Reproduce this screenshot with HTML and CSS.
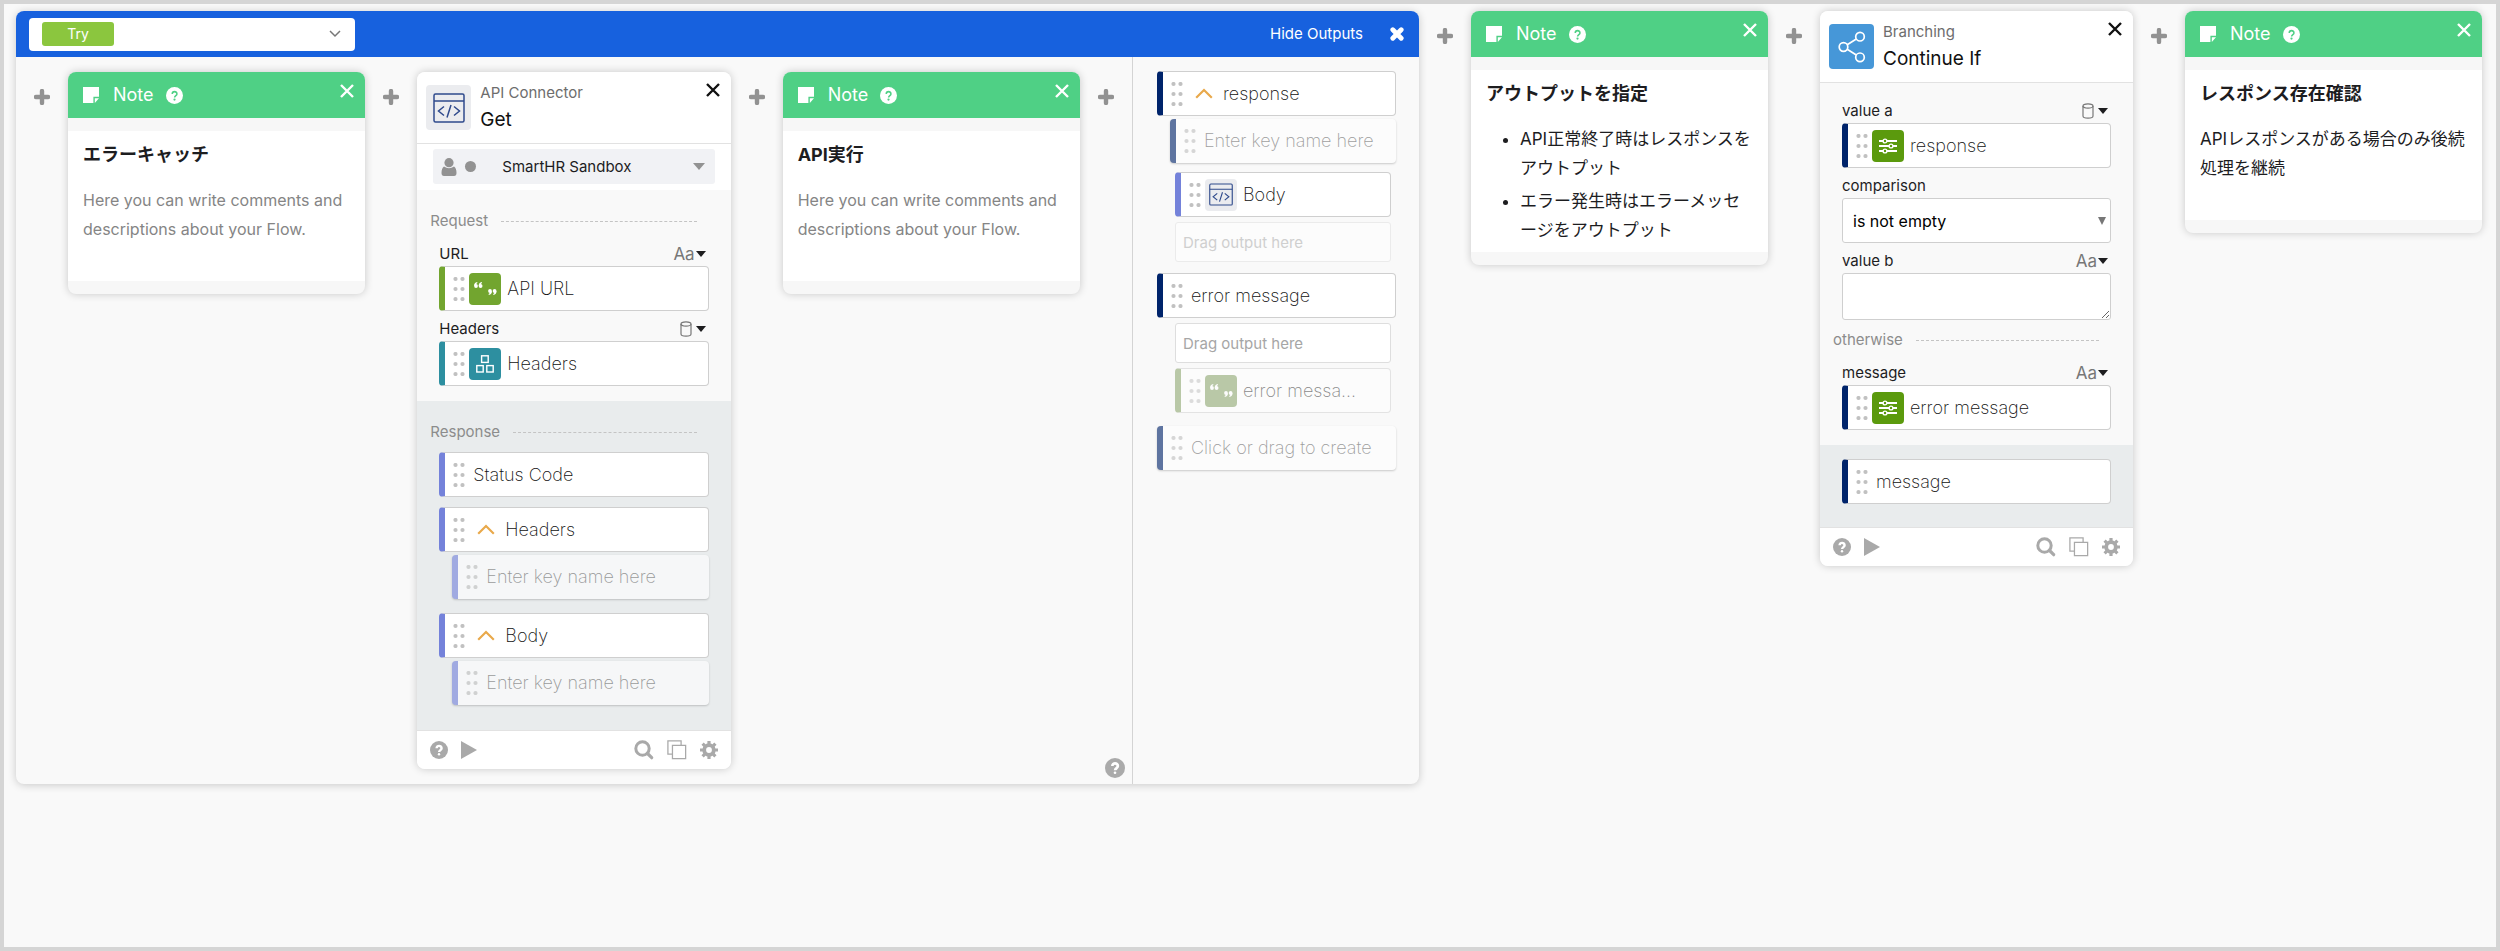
FILE: index.html
```html
<!DOCTYPE html>
<html lang="ja">
<head>
<meta charset="utf-8">
<meta name="viewport" content="width=device-width, initial-scale=1">
<title>Flow</title>
<link rel="stylesheet" href="styles.css">
</head>
<body>
<svg class="sprite" aria-hidden="true">
  <symbol id="plus" viewBox="0 0 16 16"><path d="M8 2v12M2 8h12" fill="none" stroke="currentColor" stroke-width="4.4" stroke-linecap="round"/></symbol>
  <symbol id="close" viewBox="0 0 14 14"><path d="M1 1l12 12M13 1L1 13" fill="none" stroke="currentColor" stroke-width="2.4"/></symbol>
  <symbol id="close-bold" viewBox="0 0 14 14"><path d="M2.8 2.8l8.4 8.4M11.2 2.8l-8.4 8.4" fill="none" stroke="currentColor" stroke-width="4.8" stroke-linecap="round"/></symbol>
  <symbol id="note" viewBox="0 0 16 16"><path d="M0 0h16v9.8h-5.6v6.200H0z" fill="currentColor"/><path d="M11.800 11.200H16L11.800 16z" fill="currentColor"/></symbol>
  <symbol id="help" viewBox="0 0 18 18"><circle cx="9" cy="9" r="9" fill="currentColor"/><path d="M6.600 7.300c0-3.200 5-3.200 5 0 0 1.700-2.500 1.900-2.500 3.800" fill="none" stroke="var(--mark)" stroke-width="var(--mark-width)"/><circle cx="9" cy="13.300" r="1.200" fill="var(--mark)"/></symbol>
  <symbol id="grip" viewBox="0 0 12 24"><g fill="currentColor"><circle cx="2.500" cy="2" r="2.100"/><circle cx="9.500" cy="2" r="2.100"/><circle cx="2.500" cy="12" r="2.100"/><circle cx="9.500" cy="12" r="2.100"/><circle cx="2.500" cy="22" r="2.100"/><circle cx="9.500" cy="22" r="2.100"/></g></symbol>
  <symbol id="chevron-up" viewBox="0 0 18 11"><path d="M1.200 9.800L9 2l7.800 7.800" fill="none" stroke="currentColor" stroke-width="2.200"/></symbol>
  <symbol id="caret" viewBox="0 0 12 7" preserveAspectRatio="none"><path d="M0 0h12L6 7z" fill="currentColor"/></symbol>
  <symbol id="window" viewBox="0 0 32 30"><g fill="none" stroke="currentColor" stroke-width="1.500"><rect x="1" y="1" width="30" height="28" rx="1.500"/><path d="M1 8h30M11 13.500L5.500 18l5.500 4.500M21 13.500l5.500 4.500-5.500 4.500M18 12l-4 12.500"/></g></symbol>
  <symbol id="quotes" viewBox="0 0 24 16"><g fill="currentColor"><circle cx="3" cy="5" r="1.900"/><circle cx="7.600" cy="5" r="1.900"/><path d="M1.100 5Q1 1.700 4.200 1l.2 1Q3.100 2.600 3 4zM5.700 5Q5.600 1.700 8.800 1l.2 1Q7.700 2.600 7.600 4z"/><circle cx="17" cy="10" r="1.900"/><circle cx="21.600" cy="10" r="1.900"/><path d="M18.900 10Q19 13.300 15.800 14l-.2-1Q16.900 12.400 17 11zM23.500 10Q23.600 13.300 20.400 14l-.2-1q1.300-.6 1.400-2z"/></g></symbol>
  <symbol id="cubes" viewBox="0 0 18 18"><g fill="none" stroke="currentColor" stroke-width="1.400"><rect x="5.600" y=".8" width="6.600" height="6.600"/><rect x=".8" y="10.600" width="6.400" height="6.400"/><rect x="10.800" y="10.600" width="6.400" height="6.400"/></g></symbol>
  <symbol id="sliders" viewBox="0 0 18 16"><path d="M0 3h18M0 8h18M0 13h18" stroke="currentColor" stroke-width="2"/><g fill="#5b9a0d" stroke="currentColor" stroke-width="1.400"><circle cx="6" cy="3" r="1.900"/><circle cx="12" cy="8" r="1.900"/><circle cx="6" cy="13" r="1.900"/></g></symbol>
  <symbol id="share" viewBox="0 0 28 32"><g fill="none" stroke="currentColor" stroke-width="1.700"><circle cx="5.500" cy="16" r="4.300"/><circle cx="22" cy="5.700" r="4.300"/><circle cx="22" cy="26.300" r="4.300"/><path d="M9.200 13.700l9.100-5.700M9.200 18.300l9.100 5.700"/></g></symbol>
  <symbol id="cylinder" viewBox="0 0 12 16"><g fill="none" stroke="currentColor" stroke-width="1.200"><ellipse cx="6" cy="3" rx="5" ry="2.200"/><path d="M1 3v10c0 2.900 10 2.900 10 0V3"/></g></symbol>
  <symbol id="person" viewBox="0 0 16 18"><circle cx="8" cy="4.700" r="4.600" fill="currentColor"/><path d="M3 8.500q5 3.500 10 0 2.500 1.500 2.500 6.500 0 3-2.500 3H3q-2.500 0-2.500-3 0-5 2.500-6.500z" fill="currentColor"/></symbol>
  <symbol id="play" viewBox="0 0 16 18"><path d="M0 0l16 9-16 9z" fill="currentColor"/></symbol>
  <symbol id="search" viewBox="0 0 20 20"><circle cx="8.500" cy="8.500" r="6.700" fill="none" stroke="currentColor" stroke-width="3"/><path d="M13.500 13.500l4.200 4.200" stroke="currentColor" stroke-width="3.200" stroke-linecap="round"/></symbol>
  <symbol id="copy" viewBox="0 0 22 22"><path d="M5.500 15.500H1V1h14.500v4.500M6 6h14.500v14.500H6z" fill="none" stroke="currentColor" stroke-width="1.400"/></symbol>
  <symbol id="gear" viewBox="0 0 18 18"><circle cx="9" cy="9" r="4.800" fill="none" stroke="currentColor" stroke-width="3.800"/><path d="M9 0v3M9 15v3M0 9h3M15 9h3M2.600 2.600l2.200 2.200M13.200 13.200l2.200 2.200M15.400 2.600l-2.200 2.200M4.800 13.200l-2.200 2.200" stroke="currentColor" stroke-width="3.200"/></symbol>
</svg>

<main class="canvas">
  <section class="panel">
    <header class="panel-head">
      <button class="mode" type="button"><span class="mode-tag">Try</span><svg class="mode-arrow" viewBox="0 0 12 8"><path d="M1 1l5 5 5-5" fill="none" stroke="currentColor" stroke-width="1.500"/></svg></button>
      <div class="panel-actions">
        <button class="plain hide" type="button">Hide Outputs</button>
        <button class="plain" type="button" aria-label="Remove"><svg class="i14"><use href="#close-bold"/></svg></button>
      </div>
    </header>
    <div class="panel-body">
      <div class="steps">
        <button class="add" type="button" aria-label="Add card"><svg class="i16"><use href="#plus"/></svg></button>
        <article class="card">
          <header class="note-head"><svg class="i16"><use href="#note"/></svg><h2>Note</h2><svg class="i17 on-green"><use href="#help"/></svg><button class="plain x" type="button" aria-label="Close"><svg class="i14"><use href="#close"/></svg></button></header>
          <div class="note-body"><h3>エラーキャッチ</h3><p class="hint">Here you can write comments and descriptions about your Flow.</p></div>
        </article>
        <button class="add" type="button" aria-label="Add card"><svg class="i16"><use href="#plus"/></svg></button>
        <article class="card">
          <header class="card-head">
            <span class="app app-api"><svg class="app-window"><use href="#window"/></svg></span>
            <div class="titles"><p>API Connector</p><h2>Get</h2></div>
            <button class="plain x" type="button" aria-label="Close"><svg class="i14"><use href="#close"/></svg></button>
          </header>
          <div class="account">
            <label class="account-box"><svg class="person"><use href="#person"/></svg><span class="dot"></span>
              <select aria-label="Connection"><option>SmartHR Sandbox</option></select><svg class="caret"><use href="#caret"/></svg></label>
          </div>
          <section class="inputs">
            <h3 class="rule first">Request</h3>
            <div class="label"><span>URL</span><button class="plain type" type="button"><span>Aa</span><svg class="caret small"><use href="#caret"/></svg></button></div>
            <div class="pill green"><svg class="grip"><use href="#grip"/></svg><span class="chip chip-green"><svg class="quotes"><use href="#quotes"/></svg></span><span class="name">API URL</span></div>
            <div class="label"><span>Headers</span><button class="plain type" type="button" aria-label="Object"><svg class="cylinder"><use href="#cylinder"/></svg><svg class="caret small"><use href="#caret"/></svg></button></div>
            <div class="pill teal"><svg class="grip"><use href="#grip"/></svg><span class="chip chip-teal"><svg class="i18"><use href="#cubes"/></svg></span><span class="name">Headers</span></div>
          </section>
          <section class="results">
            <h3 class="rule first">Response</h3>
            <div class="pill violet"><svg class="grip"><use href="#grip"/></svg><span class="name lone">Status Code</span></div>
            <div class="group">
              <div class="pill violet"><svg class="grip"><use href="#grip"/></svg><svg class="fold"><use href="#chevron-up"/></svg><span class="name">Headers</span></div>
              <div class="pill violet ghost key"><svg class="grip"><use href="#grip"/></svg><input type="text" aria-label="Headers key" placeholder="Enter key name here"></div>
            </div>
            <div class="group">
              <div class="pill violet"><svg class="grip"><use href="#grip"/></svg><svg class="fold"><use href="#chevron-up"/></svg><span class="name">Body</span></div>
              <div class="pill violet ghost key"><svg class="grip"><use href="#grip"/></svg><input type="text" aria-label="Body key" placeholder="Enter key name here"></div>
            </div>
          </section>
          <footer class="card-foot">
            <button class="plain" type="button" aria-label="Help"><svg class="i18 on-white"><use href="#help"/></svg></button>
            <button class="plain" type="button" aria-label="Run"><svg class="play"><use href="#play"/></svg></button>
            <button class="plain push" type="button" aria-label="Search"><svg class="i20"><use href="#search"/></svg></button>
            <button class="plain" type="button" aria-label="Duplicate"><svg class="i20"><use href="#copy"/></svg></button>
            <button class="plain" type="button" aria-label="Settings"><svg class="i18"><use href="#gear"/></svg></button>
          </footer>
        </article>
        <button class="add" type="button" aria-label="Add card"><svg class="i16"><use href="#plus"/></svg></button>
        <article class="card">
          <header class="note-head"><svg class="i16"><use href="#note"/></svg><h2>Note</h2><svg class="i17 on-green"><use href="#help"/></svg><button class="plain x" type="button" aria-label="Close"><svg class="i14"><use href="#close"/></svg></button></header>
          <div class="note-body"><h3>API実行</h3><p class="hint">Here you can write comments and descriptions about your Flow.</p></div>
        </article>
        <button class="add" type="button" aria-label="Add card"><svg class="i16"><use href="#plus"/></svg></button>
        <button class="plain panel-help" type="button" aria-label="Help"><svg class="i20 on-white"><use href="#help"/></svg></button>
      </div>
      <aside class="outputs">
        <div class="output">
          <div class="pill navy"><svg class="grip"><use href="#grip"/></svg><svg class="fold"><use href="#chevron-up"/></svg><span class="name">response</span></div>
          <div class="pill navy ghost key"><svg class="grip"><use href="#grip"/></svg><input type="text" aria-label="response key" placeholder="Enter key name here"></div>
          <div class="nested">
            <div class="pill violet"><svg class="grip"><use href="#grip"/></svg><span class="chip chip-api"><svg class="chip-window"><use href="#window"/></svg></span><span class="name">Body</span></div>
            <div class="drop faint">Drag output here</div>
          </div>
        </div>
        <div class="output">
          <div class="pill navy"><svg class="grip"><use href="#grip"/></svg><span class="name lone">error message</span></div>
          <div class="nested">
            <div class="drop">Drag output here</div>
            <div class="pill olive dimmed"><svg class="grip"><use href="#grip"/></svg><span class="chip chip-olive"><svg class="quotes"><use href="#quotes"/></svg></span><span class="name">error messa...</span></div>
          </div>
        </div>
        <div class="pill navy ghost"><svg class="grip"><use href="#grip"/></svg><input type="text" aria-label="New output" placeholder="Click or drag to create"></div>
      </aside>
    </div>
  </section>

  <button class="add" type="button" aria-label="Add card"><svg class="i16"><use href="#plus"/></svg></button>
  <article class="card">
    <header class="note-head"><svg class="i16"><use href="#note"/></svg><h2>Note</h2><svg class="i17 on-green"><use href="#help"/></svg><button class="plain x" type="button" aria-label="Close"><svg class="i14"><use href="#close"/></svg></button></header>
    <div class="note-body"><h3>アウトプットを指定</h3><ul><li>API正常終了時はレスポンスをアウトプット</li><li>エラー発生時はエラーメッセージをアウトプット</li></ul></div>
  </article>
  <button class="add" type="button" aria-label="Add card"><svg class="i16"><use href="#plus"/></svg></button>
  <article class="card">
    <header class="card-head">
      <span class="app app-branch"><svg class="share"><use href="#share"/></svg></span>
      <div class="titles"><p>Branching</p><h2>Continue If</h2></div>
      <button class="plain x" type="button" aria-label="Close"><svg class="i14"><use href="#close"/></svg></button>
    </header>
    <section class="inputs conditions">
      <div class="label"><span>value a</span><button class="plain type" type="button" aria-label="Object"><svg class="cylinder"><use href="#cylinder"/></svg><svg class="caret small"><use href="#caret"/></svg></button></div>
      <div class="pill navy"><svg class="grip"><use href="#grip"/></svg><span class="chip chip-leaf"><svg class="i18"><use href="#sliders"/></svg></span><span class="name">response</span></div>
      <div class="label"><label for="comparison">comparison</label></div>
      <div class="pick"><select id="comparison"><option>is not empty</option></select><svg class="pick-arrow"><use href="#caret"/></svg></div>
      <div class="label"><label for="value-b">value b</label><button class="plain type" type="button"><span>Aa</span><svg class="caret small"><use href="#caret"/></svg></button></div>
      <textarea id="value-b"></textarea>
      <h3 class="rule">otherwise</h3>
      <div class="label"><span>message</span><button class="plain type" type="button"><span>Aa</span><svg class="caret small"><use href="#caret"/></svg></button></div>
      <div class="pill navy"><svg class="grip"><use href="#grip"/></svg><span class="chip chip-leaf"><svg class="i18"><use href="#sliders"/></svg></span><span class="name">error message</span></div>
    </section>
    <section class="results untitled">
      <div class="pill navy"><svg class="grip"><use href="#grip"/></svg><span class="name lone">message</span></div>
    </section>
    <footer class="card-foot">
      <button class="plain" type="button" aria-label="Help"><svg class="i18 on-white"><use href="#help"/></svg></button>
      <button class="plain" type="button" aria-label="Run"><svg class="play"><use href="#play"/></svg></button>
      <button class="plain push" type="button" aria-label="Search"><svg class="i20"><use href="#search"/></svg></button>
      <button class="plain" type="button" aria-label="Duplicate"><svg class="i20"><use href="#copy"/></svg></button>
      <button class="plain" type="button" aria-label="Settings"><svg class="i18"><use href="#gear"/></svg></button>
    </footer>
  </article>
  <button class="add" type="button" aria-label="Add card"><svg class="i16"><use href="#plus"/></svg></button>
  <article class="card">
    <header class="note-head"><svg class="i16"><use href="#note"/></svg><h2>Note</h2><svg class="i17 on-green"><use href="#help"/></svg><button class="plain x" type="button" aria-label="Close"><svg class="i14"><use href="#close"/></svg></button></header>
    <div class="note-body"><h3>レスポンス存在確認</h3><p>APIレスポンスがある場合のみ後続処理を継続</p></div>
  </article>
</main>
</body>
</html>
```

FILE: styles.css
```css
* { box-sizing: border-box; }

body {
  margin: 0;
  font-family: Inter, "Noto Sans CJK JP", sans-serif;
  font-size: 15px;
  line-height: 22px;
  color: #1d1d1f;
}

h2, h3, p, ul { margin: 0; font-weight: 400; }
svg { display: block; flex: none; }
button, input, select, textarea { font: inherit; color: inherit; }
.sprite { position: absolute; width: 0; height: 0; }

.i14 { width: 14px; height: 14px; }
.i16 { width: 16px; height: 16px; }
.i17 { width: 17px; height: 17px; }
.i18 { width: 18px; height: 18px; }
.i20 { width: 20px; height: 20px; }
.on-green { --mark: #4fd085; --mark-width: 1.6; }
.on-white { --mark: #fff; --mark-width: 2.4; }

.canvas {
  display: grid;
  grid-template-columns: minmax(0, 1403fr) 52px minmax(0, 297fr) 52px minmax(0, 313fr) 52px minmax(0, 297fr);
  align-items: start;
  min-height: 100vh;
  padding: 7px 14px 16px 12px;
  border: 4px solid #d5d5d5;
  background: #f9f9f9;
}

.plain { padding: 0; border: 0; background: none; cursor: pointer; }

.add {
  display: flex;
  justify-content: center;
  padding: 17px 0 0;
  border: 0;
  background: none;
  color: #929292;
  cursor: pointer;
}

/* Error-handling panel */
.panel {
  border-radius: 8px;
  background: #f9f9f9;
  box-shadow: 0 1px 8px rgba(0, 0, 0, .2);
}

.panel-head {
  display: flex;
  align-items: center;
  justify-content: space-between;
  height: 46px;
  padding: 0 15px 0 13px;
  border-radius: 8px 8px 0 0;
  background: #1761de;
  color: #fff;
}

.mode {
  display: flex;
  align-items: center;
  justify-content: space-between;
  width: 326px;
  height: 33px;
  padding: 0 14px 0 13px;
  border: 0;
  border-radius: 4px;
  background: #fff;
}

.mode-tag {
  width: 72px;
  border-radius: 3px;
  background: #8bc63e;
  color: #fff;
  font-size: 14px;
  line-height: 24px;
}

.mode-arrow { width: 12px; height: 8px; color: #777; }
.panel-actions { display: flex; align-items: center; gap: 27px; }
.panel-body { display: grid; grid-template-columns: minmax(0, 1117fr) minmax(0, 286fr); }

.steps {
  position: relative;
  display: grid;
  grid-template-columns: 52px minmax(0, 297fr) 52px minmax(0, 313fr) 52px minmax(0, 297fr) 52px;
  align-items: start;
  padding: 15px 0;
  border-right: 1px solid #d4d4d4;
}

.panel-help { position: absolute; right: 7px; bottom: 6px; color: #aaa; }

/* Cards */
.card {
  overflow: hidden;
  border-radius: 8px;
  background: #f7f7f7;
  box-shadow: 0 0 8px rgba(0, 0, 0, .2);
}

.x { align-self: flex-start; margin-left: auto; }

.note-head {
  display: flex;
  align-items: center;
  height: 46px;
  padding: 0 11px 0 15px;
  background: #4fd085;
  color: #fff;
}

.note-head h2 { margin: 0 12px 0 14px; font-size: 18px; }
.note-head .x { margin-top: 12px; }

.note-body {
  min-height: 150px;
  margin: 13px 0;
  padding: 9px 12px 7px 15px;
  background: #fff;
  font-size: 17px;
  line-height: 29px;
  line-break: normal;
}

.note-body h3 { margin-bottom: 17px; font-size: 18px; font-weight: 700; }
.note-body ul { padding-left: 34px; }
.note-body li + li { margin-top: 4px; }
.note-body .hint { color: #858585; font-size: 16px; }

.card-head {
  display: flex;
  align-items: flex-start;
  padding: 13px 11px 12px 9px;
  border-bottom: 1px solid #e2e2e2;
  background: #fff;
}

.app {
  display: flex;
  align-items: center;
  justify-content: center;
  width: 45px;
  height: 45px;
  border-radius: 4px;
}

.app-api, .chip-api { background: #ebecef; color: #2f4a8c; }
.app-branch { background: #4697d8; color: #fff; }
.app-window { width: 32px; height: 30px; }
.share { width: 28px; height: 32px; }
.titles { margin: -3px 0 0 9px; color: #6d6d6d; }
.titles h2 { margin-top: 5px; color: #111; font-size: 19px; }
.card-head .x { margin-top: -2px; color: #111; }

.account { padding: 5px 16px 6px; background: #fff; }

.account-box {
  display: flex;
  align-items: center;
  height: 35px;
  padding: 0 10px 0 8px;
  border-radius: 3px;
  background: #f1f2f5;
  color: #929292;
}

.person { width: 16px; height: 18px; }
.dot { width: 11px; height: 11px; margin: 0 26px 0 8px; border-radius: 50%; background: currentColor; }
.account-box select { flex: 1; min-width: 0; padding: 0; border: 0; appearance: none; background: none; color: #1d1d1f; }

.inputs { padding: 0 22px 15px; background: #f9f9f9; }
.conditions { padding-top: 10px; }

.rule {
  display: flex;
  align-items: center;
  gap: 13px;
  margin: 0 12px 0 -9px;
  padding: 9px 0 4px;
  color: #8c8c8c;
  font-size: 15px;
}

.rule.first { padding-top: 20px; }
.rule::after { content: ""; flex: 1; border-top: 1px dashed #c4c4c4; }

.label {
  display: flex;
  align-items: center;
  justify-content: space-between;
  height: 24px;
  margin-top: 6px;
  padding-right: 3px;
}

.type { display: flex; align-items: center; gap: 1px; color: #777; font-size: 17px; }
.cylinder { width: 12px; height: 16px; margin-right: 3px; }
.caret { width: 12px; height: 7px; }
.caret.small { width: 10px; height: 6px; color: #1d1d1f; }

.pill {
  display: flex;
  align-items: center;
  height: 45px;
  padding-left: 8px;
  border: 1px solid #cfcfcf;
  border-left: 6px solid var(--bar);
  border-radius: 4px;
  background: #fff;
  color: #111;
  font-size: 18px;
  font-weight: 200;
}

.green { --bar: #72a52f; }
.olive { --bar: #7a9858; }
.teal { --bar: #2d8fa0; }
.violet { --bar: #7482da; }
.navy { --bar: #00246b; }
.grip { width: 12px; height: 24px; color: #c1c1c1; }
.name { margin-left: 6px; }
.name.lone { margin-left: 8px; }
.fold { width: 18px; height: 11px; margin: 0 4px 0 12px; color: #e9a94b; }

.chip {
  display: flex;
  align-items: center;
  justify-content: center;
  flex: none;
  width: 32px;
  height: 32px;
  margin-left: 4px;
  border-radius: 4px;
  color: #fff;
}

.chip-green { background: #72a52f; }
.chip-olive { background: #7a9858; }
.chip-teal { background: #2d8fa0; }
.chip-leaf { background: #5b9a0d; }
.chip-api { color: #2f4a8c; }
.chip-window { width: 24px; height: 23px; }
.quotes { width: 24px; height: 16px; }

.ghost {
  height: 44px;
  border-width: 0 0 0 6px;
  background: #fff;
  box-shadow: 0 1px 2px rgba(0, 0, 0, .3);
  opacity: .62;
}

.ghost input { flex: 1; min-width: 0; margin-left: 8px; padding: 0; border: 0; outline: 0; background: none; }
.ghost input::placeholder { color: #666; opacity: 1; }

.results { padding: 0 22px 25px; border-bottom: 1px solid #e2e2e2; background: #e9eced; }
.results .rule { padding-bottom: 9px; }
.results.untitled { padding: 14px 22px 23px; }
.group { margin-top: 10px; }
.group + .group { margin-top: 14px; }
.key { margin: 3px 0 0 13px; }

.pick { position: relative; }
.pick select, textarea {
  display: block;
  width: 100%;
  border: 1px solid #cfcfcf;
  border-radius: 3px;
  background: #fff;
}
.pick select { height: 45px; padding: 0 10px; appearance: none; color: #000; font-size: 16px; }
.pick-arrow { position: absolute; top: 19px; right: 5px; width: 8px; height: 8px; color: #777; }
textarea { height: 47px; resize: vertical; }

.card-foot {
  display: flex;
  align-items: center;
  gap: 13px;
  height: 38px;
  padding: 0 13px;
  background: #fff;
  color: #a9a9a9;
}

.play { width: 16px; height: 18px; }
.push { margin-left: auto; }

/* Outputs column */
.outputs { padding: 14px 23px 14px 24px; }
.output { margin-bottom: 11px; }
.output + .output { margin-bottom: 13px; }
.nested { display: grid; gap: 5px; margin: 5px 5px 0 18px; }
.key + .nested { margin-top: 9px; }

.drop {
  height: 40px;
  padding: 0 7px;
  border: 1px solid #dedede;
  border-radius: 3px;
  background: #fff;
  color: #a6a6a6;
  line-height: 40px;
}

.faint { opacity: .5; }
.dimmed { opacity: .5; }
```
